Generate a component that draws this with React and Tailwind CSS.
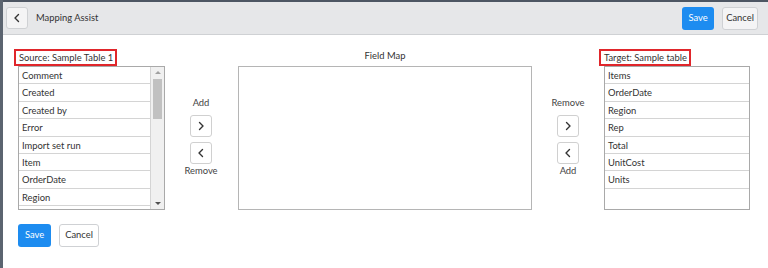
import React from 'react';

const source = ['Comment', 'Created', 'Created by', 'Error', 'Import set run', 'Item', 'OrderDate', 'Region', ''];
const target = ['Items', 'OrderDate', 'Region', 'Rep', 'Total', 'UnitCost', 'Units'];

function Chevron({ dir }) {
  return (
    <svg width="10" height="10" viewBox="0 0 10 10" fill="none" stroke="#333" strokeWidth="1.4" strokeLinecap="round" strokeLinejoin="round">
      {dir === 'right' ? <path d="M3.5 1.5 L7 5 L3.5 8.5" /> : <path d="M6.5 1.5 L3 5 L6.5 8.5" />}
    </svg>
  );
}

function Row({ label }) {
  return (
    <div className="h-[17.4px] shrink-0 border-b border-[#d4d4d4] pl-[3px] leading-[17px] text-[#333]">
      {label}
    </div>
  );
}

function MoveButtons({ top, bottom }) {
  return (
    <div className="flex w-[22px] flex-col items-center pt-[47px]">
      <div className="mb-[5px] whitespace-nowrap text-[#444]">{top}</div>
      <button className="flex h-[22px] w-[22px] items-center justify-center rounded-[3px] border border-[#d0d0d0] bg-white">
        <Chevron dir="right" />
      </button>
      <button className="mt-[5px] flex h-[22px] w-[22px] items-center justify-center rounded-[3px] border border-[#d0d0d0] bg-white">
        <Chevron dir="left" />
      </button>
      <div className="mt-[0px] whitespace-nowrap text-[#444]">{bottom}</div>
    </div>
  );
}

export default function App() {
  return (
    <div className="h-[268px] w-[768px] overflow-hidden border-l-[3px] border-[#5b6470] bg-white text-[9.4px] font-['Lato','Liberation_Sans',sans-serif]">
      {/* Header */}
      <div className="flex h-[35px] items-center border-t-2 border-b border-t-[#4d5663] border-b-[#cfd1d4] bg-[#e6e7e9] pl-[3px] pr-[10px]">
        <button className="flex h-[22px] w-[22px] items-center justify-center rounded-[3px] border border-[#cfd1d4] bg-[#f4f4f5]">
          <Chevron dir="left" />
        </button>
        <span className="ml-[8px] text-[#333]">Mapping Assist</span>
        <div className="ml-auto flex gap-[8px]">
          <button className="h-[23px] w-[32px] rounded-[3px] bg-[#1d8cf0] text-white">Save</button>
          <button className="h-[23px] w-[36px] rounded-[3px] border border-[#cfd1d4] bg-[#f4f4f5] text-[#333]">Cancel</button>
        </div>
      </div>

      {/* Body */}
      <div className="flex pl-[15px] pt-[14px]">
        {/* Source */}
        <div className="flex w-[147px] flex-col">
          <div className="-ml-[4px] h-[17px] w-fit whitespace-nowrap border-2 border-[#e0262b] pl-[3px] pr-[2px] leading-[13px] text-[#333]">
            Source: Sample Table 1
          </div>
          <div className="flex h-[144px] overflow-hidden border border-[#a9a9a9]">
            <div className="flex flex-1 flex-col overflow-hidden border-r border-[#d4d4d4]">
              {source.map((s, i) => (
                <Row key={i} label={s} />
              ))}
            </div>
            <div className="flex w-[13px] flex-col items-center bg-[#f0f0f0]">
              <div className="mt-[4px] h-0 w-0 border-x-[3px] border-b-[3px] border-x-transparent border-b-[#a0a0a0]" />
              <div className="mt-[5px] h-[40px] w-[9px] bg-[#c1c1c1]" />
              <div className="mt-auto mb-[4px] h-0 w-0 border-x-[3px] border-t-[3px] border-x-transparent border-t-[#505050]" />
            </div>
          </div>
        </div>

        <div className="ml-[25px]">
          <MoveButtons top="Add" bottom="Remove" />
        </div>

        {/* Field map */}
        <div className="ml-[26px] flex w-[294px] flex-col">
          <div className="h-[17px] text-center leading-[13px] text-[#333]">Field Map</div>
          <div className="h-[144px] border border-[#b5b5b5]" />
        </div>

        <div className="ml-[25px]">
          <MoveButtons top="Remove" bottom="Add" />
        </div>

        {/* Target */}
        <div className="ml-[25px] flex w-[146px] flex-col">
          <div className="-ml-[5px] h-[17px] w-fit whitespace-nowrap border-2 border-[#e0262b] pl-[3px] pr-[2px] leading-[13px] text-[#333]">
            Target: Sample table
          </div>
          <div className="flex h-[144px] flex-col overflow-hidden border border-[#a9a9a9]">
            {target.map((s) => (
              <Row key={s} label={s} />
            ))}
          </div>
        </div>
      </div>

      {/* Footer */}
      <div className="flex gap-[8px] pl-[15px] pt-[14px]">
        <button className="h-[23px] w-[33px] rounded-[3px] bg-[#1d8cf0] text-white">Save</button>
        <button className="h-[23px] w-[40px] rounded-[3px] border border-[#cfd1d4] bg-white text-[#333]">Cancel</button>
      </div>
    </div>
  );
}
